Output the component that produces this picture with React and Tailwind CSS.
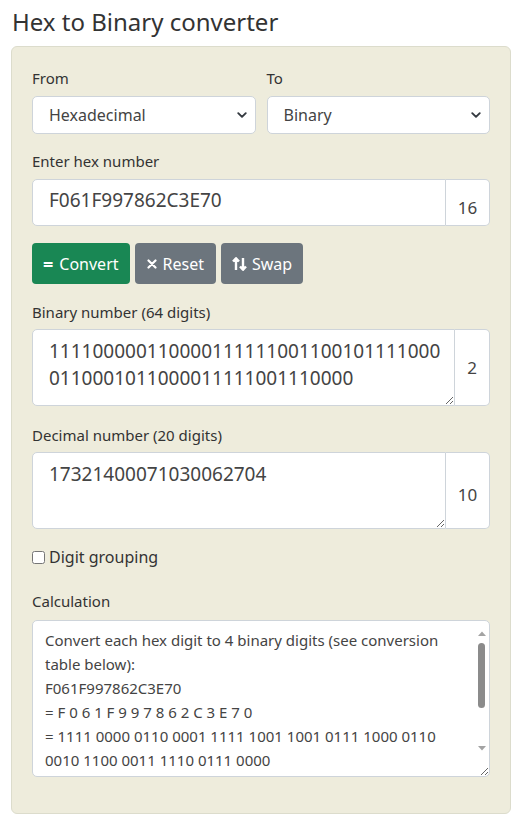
import React from "react";

const font = { fontFamily: '"Noto Sans", "Open Sans", sans-serif' };

function Chevron() {
  return (
    <svg className="pointer-events-none absolute right-[9px] top-1/2 -translate-y-1/2" width="10" height="10" viewBox="0 0 16 16">
      <path d="M2 5l6 6 6-6" fill="none" stroke="#343a40" strokeWidth="3" strokeLinecap="round" strokeLinejoin="round" />
    </svg>
  );
}

function Select({ value }) {
  return (
    <div className="relative flex-1">
      <select
        defaultValue={value}
        className="h-[38px] w-full appearance-none rounded-[5px] border border-[#ced4da] bg-white pl-[16px] text-[16px] text-[#444]"
        style={font}
      >
        <option>{value}</option>
      </select>
      <Chevron />
    </div>
  );
}

export default function App() {
  const calc =
    "Convert each hex digit to 4 binary digits (see conversion table below):\nF061F997862C3E70\n= F 0 6 1 F 9 9 7 8 6 2 C 3 E 7 0\n= 1111 0000 0110 0001 1111 1001 1001 0111 1000 0110 0010 1100 0011 1110 0111 0000\n= 1111000001100001111110011001011110000110001011000011111001110000";
  return (
    <div className="min-h-[821px] bg-white px-[11px] pt-[4px] text-[#333]" style={font}>
      <h1 className="text-[24px] leading-[36px] font-normal text-[#333] pl-[1px]">Hex to Binary converter</h1>
      <div className="mt-[6px] w-[500px] rounded-[6px] border border-[#dcdccc] bg-[#eeecdc] px-[20px] pt-[20px] pb-[36px]">
        <div className="flex gap-[11px]">
          <div className="flex-1">
            <div className="text-[15px] leading-[22px] mb-[7px]">From</div>
            <Select value="Hexadecimal" />
          </div>
          <div className="flex-1">
            <div className="text-[15px] leading-[22px] mb-[7px]">To</div>
            <Select value="Binary" />
          </div>
        </div>

        <div className="mt-[16px] text-[15px] leading-[22px]">Enter hex number</div>
        <div className="mt-[7px] flex h-[47px]">
          <input
            defaultValue="F061F997862C3E70"
            className="min-w-0 flex-1 rounded-l-[5px] border border-[#ced4da] bg-white pl-[16px] pb-[4px] text-[19px] text-[#444] outline-none"
            style={font}
          />
          <div className="flex w-[44px] items-end justify-center rounded-r-[5px] border border-l-0 border-[#ced4da] bg-white pb-[5px] text-[17px] text-[#444]">
            16
          </div>
        </div>

        <div className="mt-[17px] flex gap-[5px]">
          <button className="flex h-[41px] items-center gap-[6px] rounded-[4px] bg-[#198754] px-[11px] text-[16px] text-white" style={font}>
            <span className="text-[18px] font-bold leading-none">=</span>Convert
          </button>
          <button className="flex h-[41px] items-center gap-[6px] rounded-[4px] bg-[#6c757d] px-[12px] text-[16px] text-white" style={font}>
            <svg width="10" height="10" viewBox="0 0 10 10"><path d="M1.5 1.5l7 7M8.5 1.5l-7 7" stroke="white" strokeWidth="2.2" strokeLinecap="round" /></svg>
            Reset
          </button>
          <button className="flex h-[41px] items-center gap-[5px] rounded-[4px] bg-[#6c757d] px-[11px] text-[16px] text-white" style={font}>
            <svg width="15" height="16" viewBox="0 0 15 16">
              <path d="M4 14V3M1 5.5L4 2.2 7 5.5M11 2v11M8 10.5l3 3.3 3-3.3" fill="none" stroke="white" strokeWidth="2.4" strokeLinejoin="round" />
            </svg>
            Swap
          </button>
        </div>

        <div className="mt-[17px] text-[15px] leading-[22px]">Binary number (64 digits)</div>
        <div className="mt-[6px] flex h-[77px]">
          <textarea
            readOnly
            defaultValue="1111000001100001111110011001011110000110001011000011111001110000"
            className="min-w-0 flex-1 resize-y overflow-hidden break-all rounded-l-[5px] border border-[#ced4da] bg-white pl-[16px] pr-[12px] pt-[8px] text-[19px] leading-[27px] text-[#444] outline-none"
            style={font}
          />
          <div className="flex w-[35px] items-center justify-center rounded-r-[5px] border border-l-0 border-[#ced4da] bg-white text-[17px] text-[#444]">
            2
          </div>
        </div>

        <div className="mt-[18px] text-[15px] leading-[22px]">Decimal number (20 digits)</div>
        <div className="mt-[6px] flex h-[77px]">
          <textarea
            readOnly
            defaultValue="17321400071030062704"
            className="min-w-0 flex-1 resize-y overflow-hidden rounded-l-[5px] border border-[#ced4da] bg-white pl-[16px] pt-[8px] text-[19px] leading-[27px] text-[#444] outline-none"
            style={font}
          />
          <div className="flex w-[44px] items-center justify-center rounded-r-[5px] border border-l-0 border-[#ced4da] bg-white pt-[8px] text-[17px] text-[#444]">
            10
          </div>
        </div>

        <label className="mt-[16px] flex items-center gap-[4px] text-[16px] leading-[24px]">
          <input type="checkbox" className="m-0 h-[13px] w-[13px]" />
          Digit grouping
        </label>

        <div className="mt-[21px] text-[15px] leading-[22px]">Calculation</div>
        <div className="relative mt-[8px]">
          <textarea
            readOnly
            defaultValue={calc}
            className="block h-[157px] w-full resize-y overflow-hidden rounded-[5px] border border-[#ced4da] bg-white pl-[12px] pr-[17px] pt-[7px] text-[15px] leading-[24px] text-[#444] outline-none"
            style={font}
          />
          <svg className="pointer-events-none absolute right-[4px] top-[11px]" width="8" height="5" viewBox="0 0 8 5"><path d="M0 5L4 0.5 8 5z" fill="#a3a3a3" /></svg>
          <div className="pointer-events-none absolute right-[5px] top-[23px] h-[65px] w-[7px] rounded-full bg-[#8b8b8b]" />
          <svg className="pointer-events-none absolute right-[4px] top-[126px]" width="8" height="5" viewBox="0 0 8 5"><path d="M0 0L4 4.5 8 0z" fill="#a3a3a3" /></svg>
        </div>
      </div>
    </div>
  );
}
